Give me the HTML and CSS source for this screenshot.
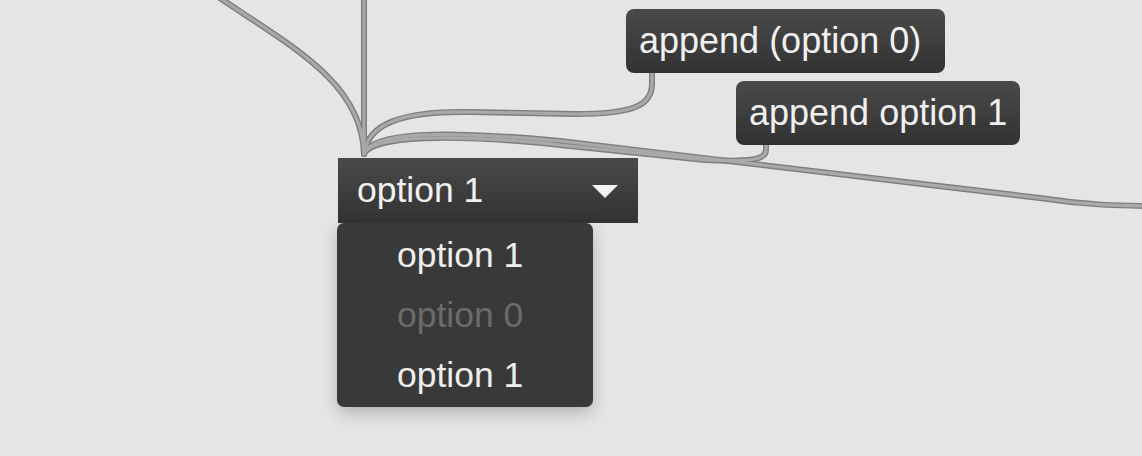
FILE: index.html
```html
<!DOCTYPE html>
<html lang="en">
<head>
    <meta charset="UTF-8">
    <meta name="viewport" content="width=device-width, initial-scale=1.0">
    <title>umenu append</title>
    <link rel="stylesheet" href="styles.css">
</head>
<body>
    <div class="patcher">
        <!-- patch cords: drawn twice, dark outline then light core -->
        <svg class="cords" width="1142" height="456" viewBox="0 0 1142 456">
            <defs>
                <path id="c1" d="M 208 -10 C 288 45, 362 80, 364 154"/>
                <path id="c2" d="M 364 -5 L 364 154"/>
                <path id="c3" d="M 652 73 L 652 84 C 652 106, 632 114, 575 114 L 470 112 C 400 111, 368 124, 364 154"/>
                <path id="c4" d="M 364 154 C 372 132, 440 130, 560 141 L 1040 198 C 1085 205, 1120 206, 1160 206"/>
                <path id="c5" d="M 766 145 L 766 150 C 766 160, 750 162, 705 160 L 560 145 C 450 133, 372 136, 364 154"/>
            </defs>
            <g class="cord-edge">
                <use href="#c1"/>
                <use href="#c2"/>
                <use href="#c3"/>
                <use href="#c4"/>
                <use href="#c5"/>
            </g>
            <g class="cord-core">
                <use href="#c1"/>
                <use href="#c2"/>
                <use href="#c3"/>
                <use href="#c4"/>
                <use href="#c5"/>
            </g>
        </svg>

        <div class="message box-one">append (option 0)</div>
        <div class="message box-two">append option 1</div>

        <div class="umenu">
            <span class="umenu-label">option 1</span>
            <span class="umenu-arrow"></span>
        </div>

        <div class="menu-list">
            <div class="menu-item">option 1</div>
            <div class="menu-item disabled">option 0</div>
            <div class="menu-item">option 1</div>
        </div>
    </div>
</body>
</html>
```

FILE: styles.css
```css
body {
    font-family: 'Liberation Sans', Arial, sans-serif;
    margin: 0;
    padding: 0;
    background-color: #e5e5e5;
    color: #f0f0f0;
    overflow: hidden;
}
.patcher {
    position: relative;
    width: 1142px;
    height: 456px;
}
.cords {
    position: absolute;
    left: 0;
    top: 0;
}
.cord-edge {
    fill: none;
    stroke: #7f7f7f;
    stroke-width: 6;
    stroke-linecap: round;
}
.cord-core {
    fill: none;
    stroke: #a9a9a9;
    stroke-width: 3.2;
    stroke-linecap: round;
}
.message {
    position: absolute;
    height: 64px;
    line-height: 64px;
    padding: 0 13px;
    box-sizing: border-box;
    font-size: 36px;
    white-space: nowrap;
    border-radius: 8px;
    background: linear-gradient(#4a4a4a, #323232);
}
.box-one {
    left: 626px;
    top: 9px;
    width: 319px;
}
.box-two {
    left: 736px;
    top: 81px;
    width: 284px;
}
.umenu {
    position: absolute;
    left: 338px;
    top: 158px;
    width: 300px;
    height: 65px;
    line-height: 65px;
    font-size: 35.5px;
    padding: 0 19px;
    box-sizing: border-box;
    display: flex;
    justify-content: space-between;
    align-items: center;
    background: linear-gradient(#494949, #333);
}
.umenu-arrow {
    width: 0;
    height: 0;
    border-left: 13px solid transparent;
    border-right: 13px solid transparent;
    border-top: 13px solid #f4f4f4;
    margin-right: 1px;
    margin-top: 1px;
}
.menu-list {
    position: absolute;
    left: 337px;
    top: 223px;
    width: 256px;
    padding: 2px 0;
    box-sizing: border-box;
    background-color: #393939;
    border-radius: 7px;
    box-shadow: 0 6px 16px rgba(0, 0, 0, 0.22);
    z-index: 2;
}
.menu-item {
    height: 60px;
    line-height: 60px;
    padding-left: 60px;
    font-size: 35.5px;
    color: #ededed;
}
.menu-item.disabled {
    color: #6b6b6b;
}
```
